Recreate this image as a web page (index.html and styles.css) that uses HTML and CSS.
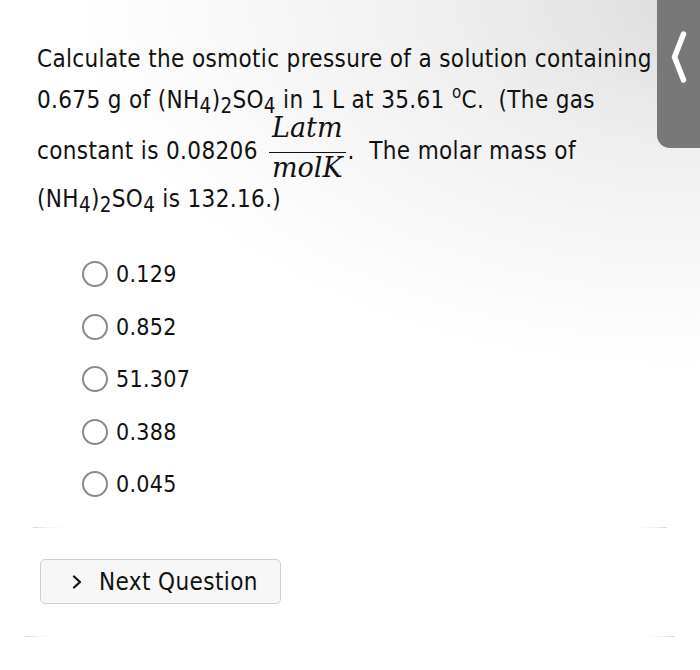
FILE: index.html
```html
<!DOCTYPE html>
<html>
<head>
<meta charset="utf-8">
<link rel="stylesheet" href="styles.css">
</head>
<body>
<div class="page">
  <div class="question">
    <div class="ln">Calculate the osmotic pressure of a solution containing</div>
    <div class="ln">0.675 g of (NH<sub>4</sub>)<sub>2</sub>SO<sub>4</sub> in 1 L at 35.61 <sup>o</sup>C.&nbsp; (The gas</div>
    <div class="ln ln-frac">constant is 0.08206 <span class="frac"><span class="num">Latm</span><span class="den">molK</span></span><span class="dot">.</span>&nbsp; The molar mass of</div>
    <div class="ln">(NH<sub>4</sub>)<sub>2</sub>SO<sub>4</sub> is 132.16.)</div>
  </div>
  <ul class="options">
    <li class="option"><span class="radio"></span><span class="opt-text">0.129</span></li>
    <li class="option"><span class="radio"></span><span class="opt-text">0.852</span></li>
    <li class="option"><span class="radio"></span><span class="opt-text">51.307</span></li>
    <li class="option"><span class="radio"></span><span class="opt-text">0.388</span></li>
    <li class="option"><span class="radio"></span><span class="opt-text">0.045</span></li>
  </ul>
  <div class="rule rule-top"></div>
  <div class="actions">
    <button class="next-btn"><svg class="chev" width="10" height="14" viewBox="0 0 10 14"><path d="M2 1.5 L8 7 L2 12.5" fill="none" stroke="#111" stroke-width="2.2" stroke-linecap="round" stroke-linejoin="round"/></svg><span>Next Question</span></button>
  </div>
  <div class="rule rule-bottom"></div>
</div>
<div class="side-tab"><svg width="16" height="52" viewBox="0 0 16 52"><path d="M12.5 3 L3.5 26 L12.5 49" fill="none" stroke="#fff" stroke-width="5.5" stroke-linecap="round" stroke-linejoin="round"/></svg></div>
</body>
</html>
```
FILE: styles.css
```css
html, body {
  margin: 0;
  padding: 0;
}
body {
  width: 700px;
  height: 670px;
  overflow: hidden;
  background: radial-gradient(ellipse 640px 380px at 100% 0%, #dcdcdc 0%, #f1f1f1 45%, #ffffff 100%);
  font-family: "DejaVu Sans", "Liberation Sans", sans-serif;
  font-stretch: condensed;
  color: #111;
  position: relative;
}
.page {
  padding: 39px 0 0 37px;
}
.question {
  width: 625px;
  font-size: 24px;
  letter-spacing: 0.35px;
  white-space: nowrap;
}
.ln {
  height: 41px;
  line-height: 41px;
}
.ln-frac {
  height: 54px;
  line-height: 52px;
  padding-top: 4px;
}
.ln sub {
  font-size: 0.85em;
  vertical-align: -0.25em;
  line-height: 0;
}
.ln sup {
  font-size: 0.7em;
  vertical-align: 0.6em;
  line-height: 0;
}
.frac {
  display: inline-block;
  vertical-align: -18px;
  margin: -40px 0 -30px 4px;
  font-family: "DejaVu Serif", "Liberation Serif", serif;
  font-stretch: normal;
  font-style: italic;
  font-size: 27px;
  line-height: 30px;
  letter-spacing: 0;
  text-align: center;
}
.frac .num {
  display: block;
  border-bottom: 1.5px solid #111;
  padding: 0 3px 9px;
}
.frac .den {
  display: block;
  padding: 0 3px 0;
}
.dot {
  margin-left: 2px;
}
.options {
  list-style: none;
  margin: 40px 0 0 0;
  padding: 0 0 0 45px;
  display: flex;
  flex-direction: column;
  gap: 24.5px;
}
.option {
  display: flex;
  align-items: center;
  gap: 8px;
  height: 28px;
  font-size: 23px;
  letter-spacing: 0.3px;
}
.radio {
  width: 22px;
  height: 22px;
  border: 2.5px solid #8a8a8a;
  border-radius: 50%;
  background: #fff;
  flex: none;
}
.rule {
  height: 1px;
}
.rule-top {
  margin: 29px 0 0 -4px;
  width: 634px;
  background: linear-gradient(to right, #d8d8d8 0, #f4f4f4 14px, #fdfdfd 30px, #fdfdfd calc(100% - 30px), #f4f4f4 calc(100% - 14px), #d8d8d8 100%);
}
.actions {
  padding: 31px 0 0 3px;
}
.next-btn {
  width: 241px;
  height: 45px;
  border: 1.5px solid #cfcfcf;
  border-radius: 5px;
  background: #f7f7f7;
  display: flex;
  align-items: center;
  gap: 17px;
  padding: 0 0 0 31px;
  font-family: "DejaVu Sans", "Liberation Sans", sans-serif;
  font-stretch: condensed;
  font-size: 24px;
  letter-spacing: 0.4px;
  color: #111;
}
.chev {
  flex: none;
}
.rule-bottom {
  margin: 32px 0 0 -12px;
  width: 650px;
  background: linear-gradient(to right, #d8d8d8 0, #f4f4f4 14px, #fdfdfd 30px, #fdfdfd calc(100% - 30px), #f4f4f4 calc(100% - 14px), #d8d8d8 100%);
}
.side-tab {
  position: absolute;
  top: 0;
  right: 0;
  width: 43px;
  height: 148px;
  background: #787878;
  border-bottom-left-radius: 13px;
  display: flex;
  justify-content: center;
  padding-top: 31px;
  box-sizing: border-box;
}
```
